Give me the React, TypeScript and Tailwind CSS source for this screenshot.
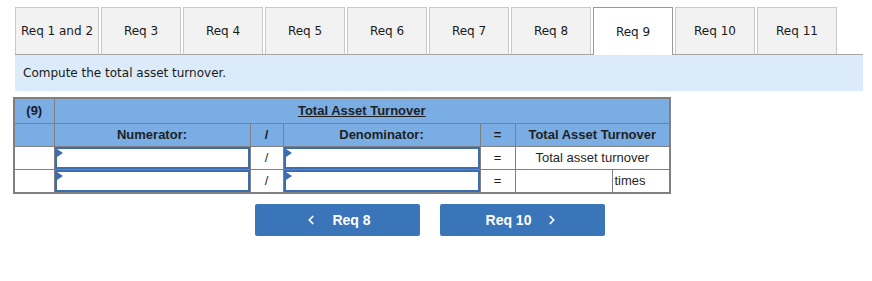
import React from "react";
import { ChevronLeft, ChevronRight } from "lucide-react";

const tabs = ["Req 1 and 2", "Req 3", "Req 4", "Req 5", "Req 6", "Req 7", "Req 8", "Req 9", "Req 10", "Req 11"];

function InputCell() {
  return (
    <td className="border border-[#808080] p-0 align-middle">
      <div className="relative h-[22px] border-2 border-[#3c6db2] bg-white">
        <div
          className="absolute left-0 top-0 h-0 w-0 border-y-[4px] border-l-[6px] border-y-transparent border-l-[#3c6db2]"
        />
      </div>
    </td>
  );
}

export default function App() {
  return (
    <div className="min-h-[281px] w-[872px] bg-white text-[#1f1f1f]">
      <div className="ml-[15px] w-[848px] pt-[7px]">
        <div className="flex h-[48px] items-end gap-[2px] border-b border-[#a6a6a6]">
          {tabs.map((t, i) => {
            const active = t === "Req 9";
            const w = i === 0 ? "w-[84px]" : "w-[80px]";
            return active ? (
              <div
                key={t}
                className={`${w} mb-[-1px] flex h-[48px] items-center justify-center border border-b-0 border-[#999999] bg-white text-[12px] text-[#1a1a1a] [font-family:'DejaVu_Sans',sans-serif]`}
              >
                {t}
              </div>
            ) : (
              <div
                key={t}
                className={`${w} flex h-[47px] items-center justify-center border border-b-0 border-[#c8c8c8] bg-[#f2f2f2] text-[12px] text-[#1a1a1a] [font-family:'DejaVu_Sans',sans-serif]`}
              >
                {t}
              </div>
            );
          })}
        </div>
        <div className="flex h-[36px] items-center bg-[#dbebf9] pl-[8px] text-[12px] text-[#1a1a1a] [font-family:'DejaVu_Sans',sans-serif]">
          Compute the total asset turnover.
        </div>
      </div>

      <div className="ml-[13px] mt-[6px] [font-family:'Liberation_Sans',Arial,sans-serif] text-[13px] leading-none">
        <table className="w-[656px] table-fixed border-collapse border-2 border-[#808080]">
          <colgroup>
            <col className="w-[40px]" />
            <col className="w-[196px]" />
            <col className="w-[33px]" />
            <col className="w-[197px]" />
            <col className="w-[35px]" />
            <col className="w-[97px]" />
            <col className="w-[58px]" />
          </colgroup>
          <tbody>
            <tr className="h-[25px] bg-[#79ade4]">
              <td className="border border-[#808080] text-center font-bold text-[#1a1a2e]">(9)</td>
              <td colSpan={6} className="border border-[#808080] text-center font-bold underline">
                Total Asset Turnover
              </td>
            </tr>
            <tr className="h-[23px] bg-[#79ade4] font-bold">
              <td className="border border-[#808080]"></td>
              <td className="border border-[#808080] text-center">Numerator:</td>
              <td className="border border-[#808080] text-center">/</td>
              <td className="border border-[#808080] text-center">Denominator:</td>
              <td className="border border-[#808080] text-center">=</td>
              <td colSpan={2} className="border border-[#808080] text-center">Total Asset Turnover</td>
            </tr>
            <tr className="h-[23px] bg-white">
              <td className="border border-[#808080]"></td>
              <InputCell />
              <td className="border border-[#808080] text-center">/</td>
              <InputCell />
              <td className="border border-[#808080] text-center">=</td>
              <td colSpan={2} className="border border-[#808080] text-center">Total asset turnover</td>
            </tr>
            <tr className="h-[24px] bg-white">
              <td className="border border-[#808080]"></td>
              <InputCell />
              <td className="border border-[#808080] text-center">/</td>
              <InputCell />
              <td className="border border-[#808080] text-center">=</td>
              <td className="border border-[#808080]"></td>
              <td className="border border-[#808080] pl-[2px] text-left">times</td>
            </tr>
          </tbody>
        </table>
      </div>

      <div className="ml-[255px] mt-[10px] flex gap-[20px] [font-family:'Liberation_Sans',Arial,sans-serif]">
        <button className="flex h-[32px] w-[165px] items-center justify-center gap-[14px] rounded-[2px] bg-[#3a75ba] text-[14px] font-bold text-white">
          <ChevronLeft size={14} strokeWidth={3} />
          <span>Req 8</span>
        </button>
        <button className="flex h-[32px] w-[165px] items-center justify-center gap-[14px] rounded-[2px] bg-[#3a75ba] text-[14px] font-bold text-white">
          <span>Req 10</span>
          <ChevronRight size={14} strokeWidth={3} />
        </button>
      </div>
    </div>
  );
}
